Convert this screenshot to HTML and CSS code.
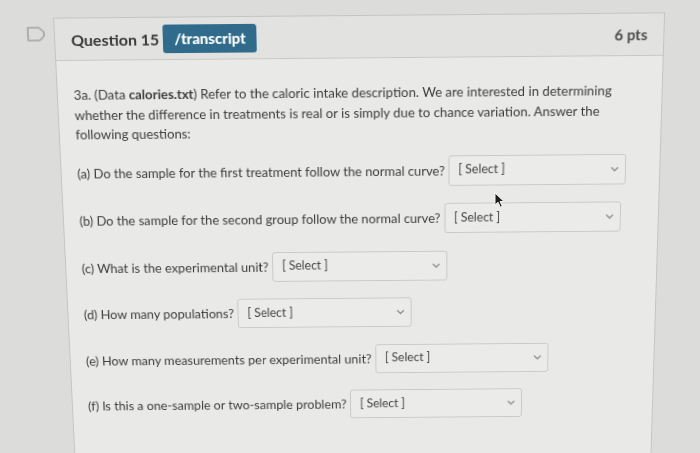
FILE: index.html
```html
<!DOCTYPE html>
<html lang="en">
<head>
<meta charset="utf-8">
<title>Question 15</title>
<link rel="stylesheet" href="styles.css">
</head>
<body>
<div class="stage">
  <div class="flag">
    <svg width="18" height="15" viewBox="0 0 18 15"><path d="M1 1 H12 L17 5.5 V9.5 L12.5 14 H1 Z" fill="none" stroke="#a3a3a1" stroke-width="1.6" stroke-linejoin="round"/></svg>
  </div>
  <section class="card">
    <header class="qhead">
      <div class="qtitle"><span class="qname">Question 15</span><span class="tag">/transcript</span></div>
      <span class="pts">6 pts</span>
    </header>
    <div class="qbody">
      <p class="qtext">3a. (Data <b>calories.txt</b>) Refer to the caloric intake description. We are interested in determining whether the difference in treatments is real or is simply due to chance variation. Answer the following questions:</p>
      <div class="rows">
        <div class="row"><span class="label">(a) Do the sample for the first treatment follow the normal curve?</span><div class="select"><span>[ Select ]</span><svg class="chev" width="9" height="6" viewBox="0 0 9 6"><path d="M1 1 L4.5 4.5 L8 1" fill="none" stroke="#8a8a88" stroke-width="1.3"/></svg></div></div>
        <div class="row"><span class="label">(b) Do the sample for the second group follow the normal curve?</span><div class="select"><span>[ Select ]</span><svg class="chev" width="9" height="6" viewBox="0 0 9 6"><path d="M1 1 L4.5 4.5 L8 1" fill="none" stroke="#8a8a88" stroke-width="1.3"/></svg></div></div>
        <div class="row"><span class="label">(c) What is the experimental unit?</span><div class="select"><span>[ Select ]</span><svg class="chev" width="9" height="6" viewBox="0 0 9 6"><path d="M1 1 L4.5 4.5 L8 1" fill="none" stroke="#8a8a88" stroke-width="1.3"/></svg></div></div>
        <div class="row"><span class="label">(d) How many populations?</span><div class="select"><span>[ Select ]</span><svg class="chev" width="9" height="6" viewBox="0 0 9 6"><path d="M1 1 L4.5 4.5 L8 1" fill="none" stroke="#8a8a88" stroke-width="1.3"/></svg></div></div>
        <div class="row"><span class="label">(e) How many measurements per experimental unit?</span><div class="select"><span>[ Select ]</span><svg class="chev" width="9" height="6" viewBox="0 0 9 6"><path d="M1 1 L4.5 4.5 L8 1" fill="none" stroke="#8a8a88" stroke-width="1.3"/></svg></div></div>
        <div class="row"><span class="label">(f) Is this a one-sample or two-sample problem?</span><div class="select"><span>[ Select ]</span><svg class="chev" width="9" height="6" viewBox="0 0 9 6"><path d="M1 1 L4.5 4.5 L8 1" fill="none" stroke="#8a8a88" stroke-width="1.3"/></svg></div></div>
      </div>
    </div>
  </section>
</div>
<svg class="cursor" width="12" height="17" viewBox="0 0 12 17"><path d="M1 1 V13 L4 10.2 L6.3 15.2 L8.3 14.3 L6 9.5 H10 Z" fill="#1e1e1e" stroke="#f4f4f4" stroke-width="1"/></svg>
</body>
</html>
```

FILE: styles.css
```css
html, body {
  margin: 0;
  padding: 0;
}
body {
  width: 700px;
  height: 453px;
  overflow: hidden;
  background: #dcdcda;
  font-family: Lato, "Open Sans", sans-serif;
  color: #3c3c3c;
  position: relative;
}
.stage {
  display: flex;
  align-items: flex-start;
  padding-top: 15px;
  transform-origin: 359px 15px;
  transform: perspective(1000px) rotateX(-7.4deg) rotateZ(-0.5deg);
}
.flag {
  width: 53px;
  flex: none;
  padding-top: 9px;
  padding-left: 26px;
  box-sizing: border-box;
}
.flag svg {
  display: block;
}
.card {
  width: 612px;
  min-height: 480px;
  box-sizing: border-box;
  border: 1px solid #c4c4c2;
  border-bottom: none;
  background: #e9e9e7;
}
.qhead {
  height: 43px;
  box-sizing: border-box;
  display: flex;
  align-items: center;
  justify-content: space-between;
  padding: 0 16px;
  background: #e2e2e0;
  border-bottom: 1px solid #c8c8c6;
}
.qtitle {
  display: flex;
  align-items: center;
}
.qname {
  font-size: 16px;
  font-weight: 700;
  color: #3a3a3a;
}
.tag {
  margin-left: 4px;
  height: 29px;
  display: inline-flex;
  align-items: center;
  padding: 0 11px;
  background: #306b8b;
  color: #ffffff;
  font-size: 15px;
  font-weight: 900;
  border-radius: 3px;
}
.pts {
  font-size: 15px;
  font-weight: 700;
  color: #4a4a4a;
}
.qbody {
  padding: 25px 19px 0 16px;
}
.qtext {
  margin: 0 0 14px;
  font-size: 13.3px;
  line-height: 20.5px;
  color: #3d3d3d;
}
.qtext b {
  font-weight: 700;
}
.rows {
  display: flex;
  flex-direction: column;
  gap: 18.5px;
}
.row {
  display: flex;
  align-items: center;
  font-size: 13.2px;
  color: #3d3d3d;
}
.label {
  white-space: nowrap;
}
.select {
  width: 181px;
  height: 32px;
  flex: none;
  box-sizing: border-box;
  margin-left: 4px;
  display: flex;
  align-items: center;
  justify-content: space-between;
  padding: 0 6px 2px 9px;
  border: 1px solid #c9c9c7;
  border-radius: 3px;
  background: #ebebe9;
  font-size: 12.5px;
  color: #444444;
}
.chev {
  display: block;
  margin-top: 2px;
}
.cursor {
  position: absolute;
  left: 494px;
  top: 192px;
}
```
